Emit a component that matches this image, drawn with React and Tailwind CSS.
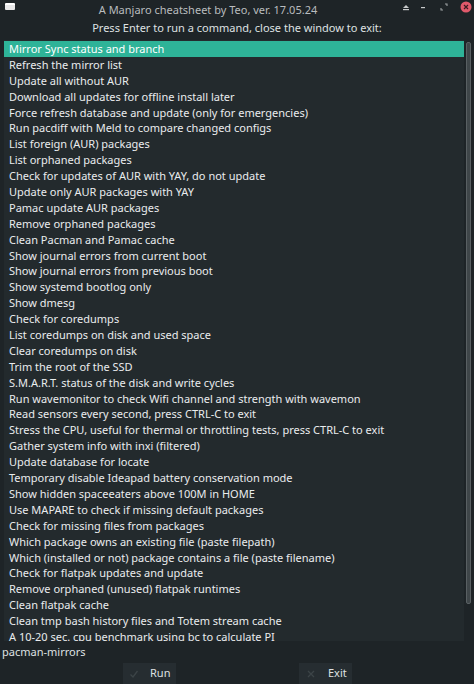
import React, { useState } from "react";

// menu entries
const items = [
	"Mirror Sync status and branch",
	"Refresh the mirror list",
	"Update all without AUR",
	"Download all updates for offline install later",
	"Force refresh database and update (only for emergencies)",
	"Run pacdiff with Meld to compare changed configs",
	"List foreign (AUR) packages",
	"List orphaned packages",
	"Check for updates of AUR with YAY, do not update",
	"Update only AUR packages with YAY",
	"Pamac update AUR packages",
	"Remove orphaned packages",
	"Clean Pacman and Pamac cache",
	"Show journal errors from current boot",
	"Show journal errors from previous boot",
	"Show systemd bootlog only",
	"Show dmesg",
	"Check for coredumps",
	"List coredumps on disk and used space",
	"Clear coredumps on disk",
	"Trim the root of the SSD",
	"S.M.A.R.T. status of the disk and write cycles",
	"Run wavemonitor to check Wifi channel and strength with wavemon",
	"Read sensors every second, press CTRL-C to exit",
	"Stress the CPU, useful for thermal or throttling tests, press CTRL-C to exit",
	"Gather system info with inxi (filtered)",
	"Update database for locate",
	"Temporary disable Ideapad battery conservation mode",
	"Show hidden spaceeaters above 100M in HOME",
	"Use MAPARE to check if missing default packages",
	"Check for missing files from packages",
	"Which package owns an existing file (paste filepath)",
	"Which (installed or not) package contains a file (paste filename)",
	"Check for flatpak updates and update",
	"Remove orphaned (unused) flatpak runtimes",
	"Clean flatpak cache",
	"Clean tmp bash history files and Totem stream cache",
	"A 10-20 sec. cpu benchmark using bc to calculate PI",
];

const App = () => {
	const [index, setIndex] = useState(0);
	return (
		<div
			className="w-[474px] h-[684px] bg-[#1e2427] text-[#eaeced] text-[11px] flex flex-col overflow-hidden"
			style={{ fontFamily: '"Noto Sans", "Open Sans", sans-serif' }}
		>
			{/* title bar */}
			<div className="relative h-[17px] flex items-center justify-center pr-[58px] shrink-0">
				<div className="absolute left-[5px] top-[3px] w-[10px] h-[7px] bg-[#e8e8e8] border-t-2 border-white rounded-[1px]" />
				<div className="text-[#b9bcbe] leading-none pt-[1px]">
					A Manjaro cheatsheet by Teo, ver. 17.05.24
				</div>
				<div className="absolute right-[2px] top-[1px] h-[12px] flex items-center gap-[11px]">
					<svg width="10" height="10" viewBox="0 0 10 10" className="mr-[-4px]">
						<path d="M2 6 L5 3 L8 6 Z" fill="#c8cacb" />
						<rect x="2" y="7" width="6" height="1.2" fill="#c8cacb" />
					</svg>
					<svg width="10" height="10" viewBox="0 0 10 10">
						<rect x="3" y="5" width="4" height="1.2" fill="#c8cacb" />
					</svg>
					<svg width="10" height="10" viewBox="0 0 10 10">
						<path d="M6 2 L8 2 L8 4 M4 8 L2 8 L2 6" stroke="#9ea2a4" strokeWidth="1.1" fill="none" />
					</svg>
					<svg width="12" height="12" viewBox="0 0 12 12">
						<circle cx="6" cy="6" r="5.5" fill="#e05a6b" />
						<path d="M4 4 L8 8 M8 4 L4 8" stroke="#3a1c22" strokeWidth="1.2" />
					</svg>
				</div>
			</div>

			{/* prompt */}
			<div className="h-[23px] flex items-center justify-center shrink-0 text-[#dfe1e2]">
				Press Enter to run a command, close the window to exit:
			</div>

			{/* list */}
			<div className="flex h-[601px] shrink-0">
				<div className="ml-[4px] w-[460px] bg-[#232a2d] overflow-hidden pt-[1px]">
					{items.map((item, itemIndex) => (
						<div
							key={itemIndex}
							onClick={() => setIndex(itemIndex)}
							className={`${
								index === itemIndex ? "bg-[#2eb398] text-white" : ""
							} h-[15.9px] leading-[15.9px] pl-[5px] whitespace-nowrap cursor-default`}
						>
							{item}
						</div>
					))}
				</div>
				{/* scrollbar */}
				<div className="ml-[2px] w-[6px] pt-[2px]">
					<div className="w-[5px] h-[562px] bg-[#3f4649] rounded-[2px] border border-[#596063]" />
				</div>
			</div>

			{/* selected command */}
			<div className="h-[22px] flex items-center pl-[2px] shrink-0 text-[#dfe1e2]">
				pacman-mirrors
			</div>

			{/* buttons */}
			<div className="flex-1 flex items-start">
				<button className="ml-[123px] w-[53px] h-[21px] bg-[#262d31] flex items-center text-[#dfe1e2]">
					<svg width="10" height="10" viewBox="0 0 10 10" className="ml-[6px]">
						<path d="M1.5 5.5 L4 8 L8.5 2" stroke="#3c4447" strokeWidth="1.3" fill="none" />
					</svg>
					<span className="ml-[11px]">Run</span>
				</button>
				<button className="ml-[123px] w-[53px] h-[21px] bg-[#262d31] flex items-center text-[#dfe1e2]">
					<svg width="10" height="10" viewBox="0 0 10 10" className="ml-[7px]">
						<path d="M2 2 L8 8 M8 2 L2 8" stroke="#3c4447" strokeWidth="1.3" fill="none" />
					</svg>
					<span className="ml-[12px]">Exit</span>
				</button>
			</div>
		</div>
	);
};

export default App;
